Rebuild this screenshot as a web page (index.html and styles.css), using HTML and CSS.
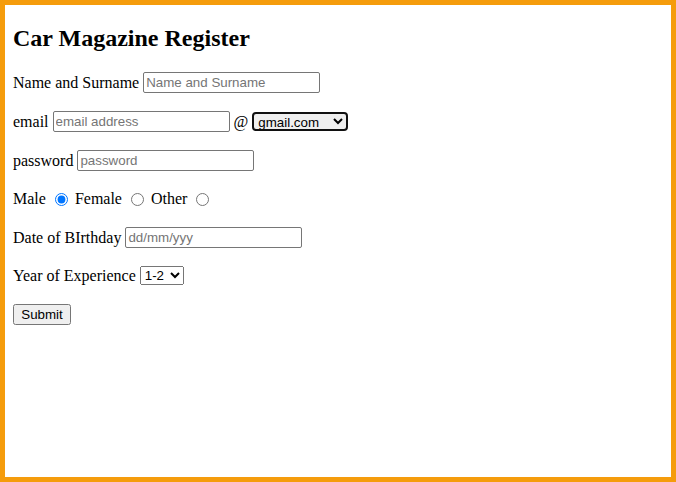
FILE: index.html
```html
<!DOCTYPE html>
<html class="frame">
<head>
<meta charset="utf-8">
<title>Car Magazine Register</title>
<link rel="stylesheet" href="styles.css">
</head>
<body class="page">
<h2 class="title">Car Magazine Register</h2>
<form class="register">
  <p class="row">Name and Surname <input class="field" type="text" placeholder="Name and Surname"></p>
  <p class="row">email <input class="field" type="text" placeholder="email address"> @ <select class="domain"><option>gmail.com</option><option>yahoo.com</option><option>outlook.com</option></select></p>
  <p class="row">password <input class="field" type="password" placeholder="password"></p>
  <p class="row">Male <input class="radio" type="radio" name="g" checked> Female <input class="radio" type="radio" name="g"> Other <input class="radio" type="radio" name="g"></p>
  <p class="row">Date of BIrthday <input class="field" type="text" placeholder="dd/mm/yyy"></p>
  <p class="row">Year of Experience <select class="years"><option>1-2</option><option>3-5</option><option>5+</option></select></p>
  <p class="row"><input class="submit" type="submit" value="Submit"></p>
</form>
</body>
</html>
```

FILE: styles.css
```css
.frame {
  height: 100%;
  box-sizing: border-box;
  border: 5px solid #f59c0c;
  background: #fff;
}
.page {
  margin: 0;
  padding: 0 8px;
  font-family: "Liberation Serif", "Times New Roman", serif;
  font-size: 16px;
  color: #000;
}
.title {
  font-size: 24px;
  font-weight: bold;
  margin: 19.92px 0;
  line-height: 27.6px;
}
.register {
  margin: 0;
}
.row {
  margin: 16px 0;
  height: 22.6px;
  line-height: 21px;
}
.field,
.domain,
.years,
.submit {
  font-family: "Liberation Sans", Arial, sans-serif;
  font-size: 13.333px;
  vertical-align: top;
}
.field {
  box-sizing: border-box;
  width: 177px;
  height: 21px;
  padding: 1px 2px;
  border: 1px solid #767676;
  border-radius: 2px;
}
.field::placeholder {
  color: #757575;
}
.domain {
  box-sizing: border-box;
  width: 96px;
  height: 19px;
  margin-top: 1px;
  border: 2px solid #101010;
  border-radius: 4px;
  color: #000;
}
.years {
  box-sizing: border-box;
  width: 44px;
  height: 19px;
  margin-top: 1px;
}
.radio {
  vertical-align: -2px;
}
.submit {
  box-sizing: border-box;
  width: 58px;
  height: 21px;
}
```
